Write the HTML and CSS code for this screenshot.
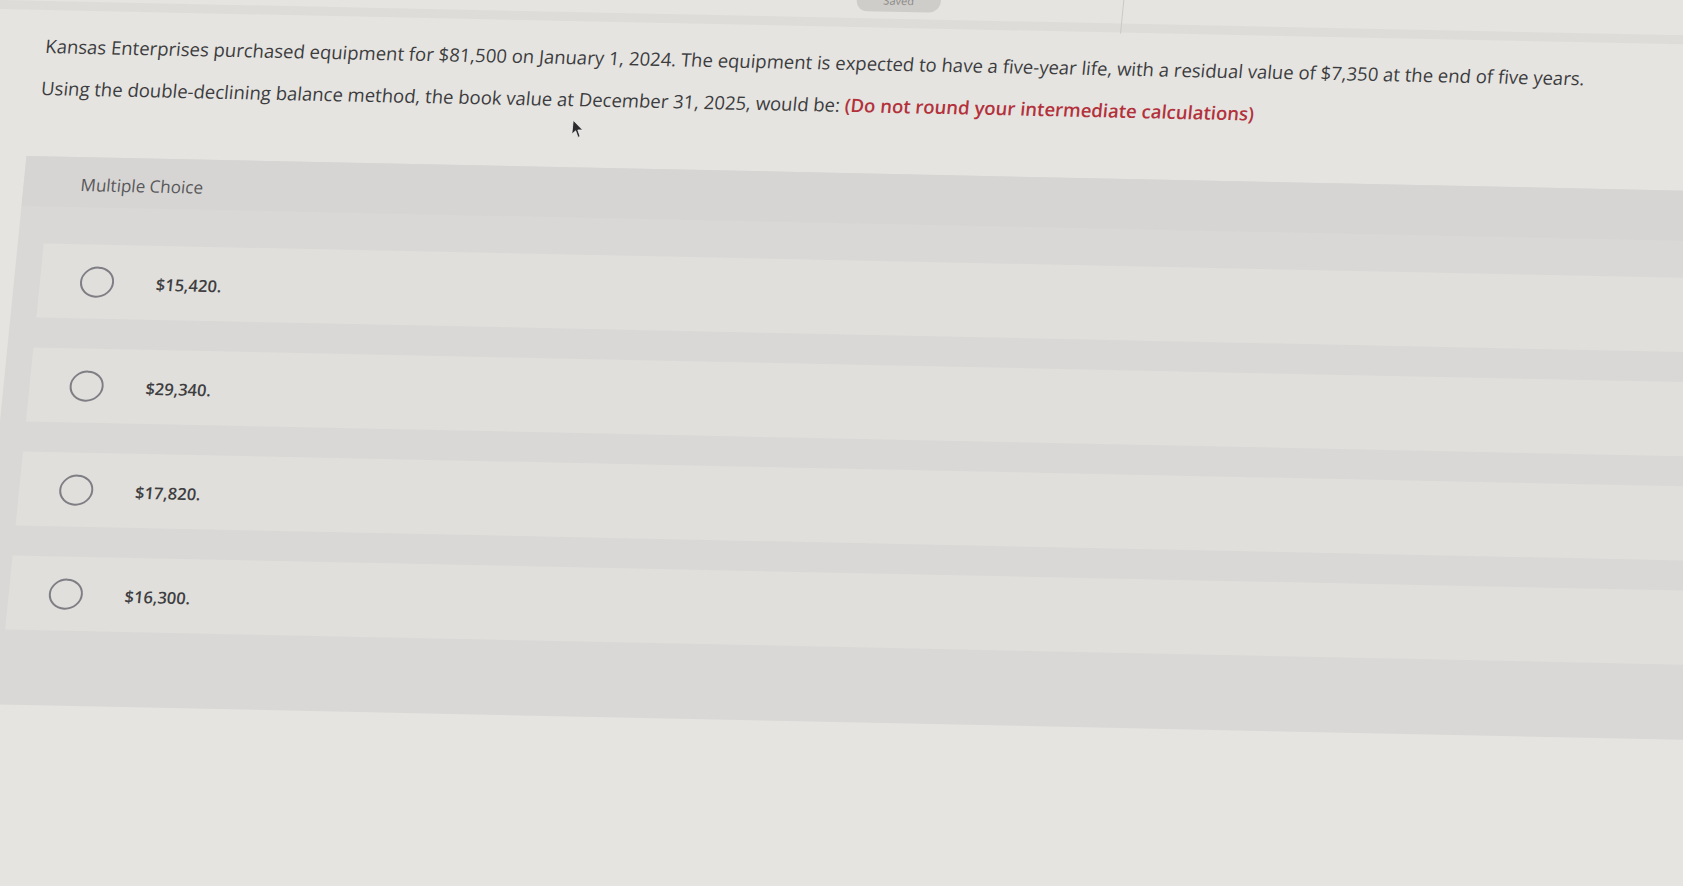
FILE: index.html
```html
<!DOCTYPE html>
<html lang="en">
<head>
<meta charset="utf-8">
<title>Multiple Choice</title>
<link rel="stylesheet" href="styles.css">
</head>
<body>
<div class="stage">
  <header class="topbar">
    <div class="saved">Saved</div>
    <div class="divider"></div>
  </header>
  <section class="question">
    <p class="q-line">Kansas Enterprises purchased equipment for $81,500 on January 1, 2024. The equipment is expected to have a five-year life, with a residual value of $7,350 at the end of five years.</p>
    <p class="q-line">Using the double-declining balance method, the book value at December 31, 2025, would be: <strong class="note">(Do not round your intermediate calculations)</strong></p>
  </section>
  <svg class="cursor" width="14" height="19" viewBox="0 0 14 19" aria-hidden="true">
    <path d="M1 1 L1 15 L4.5 11.5 L7.5 18 L9.5 17 L6.6 10.6 L11.5 10.6 Z" fill="#2b2b2e" stroke="#f2f2f2" stroke-width="0.8"/>
  </svg>
  <section class="mc">
    <div class="mc-head">Multiple Choice</div>
    <div class="mc-options">
      <label class="opt"><span class="radio"></span><span class="opt-text">$15,420.</span></label>
      <label class="opt"><span class="radio"></span><span class="opt-text">$29,340.</span></label>
      <label class="opt"><span class="radio"></span><span class="opt-text">$17,820.</span></label>
      <label class="opt"><span class="radio"></span><span class="opt-text">$16,300.</span></label>
    </div>
  </section>
</div>
</body>
</html>
```
FILE: styles.css
```css
html, body {
  margin: 0;
  padding: 0;
  overflow: hidden;
  background: #e5e4e1;
  height: 100%;
}

.stage {
  position: relative;
  width: 1820px;
  height: 1000px;
  transform-origin: 0 0;
  transform: matrix(1, 0.021, -0.1, 1, 0, 0);
  font-family: "Open Sans", "Noto Sans", "Liberation Sans", sans-serif;
  color: #3c3c3e;
}

.topbar {
  height: 9px;
  background: #dedcd8;
  display: flex;
  align-items: flex-start;
  padding-left: 855px;
}

.saved {
  width: 84px;
  height: 24px;
  margin-top: -31px;
  border-radius: 11px;
  background: #cfcdc9;
  color: #8c8a88;
  font-size: 11px;
  line-height: 26px;
  text-align: center;
  overflow: hidden;
}

.divider {
  width: 1px;
  height: 40px;
  margin-top: -30px;
  margin-left: 182px;
  background: #cbc9c5;
}

.question {
  padding: 24px 0 0 50px;
  height: 122px;
}

.q-line {
  margin: 0 0 18px 0;
  font-size: 18.5px;
  line-height: 24px;
  white-space: nowrap;
}

.note {
  color: #b3313b;
  font-weight: 600;
}

.cursor {
  position: absolute;
  left: 583px;
  top: 107px;
}

.mc {
  margin-left: 42px;
  background: #d9d8d6;
  padding-bottom: 75px;
}

.mc-head {
  background: #d6d5d3;
  padding: 17px 0 11px 57px;
  font-size: 17px;
  line-height: 22px;
  color: #58585b;
}

.mc-options {
  display: flex;
  flex-direction: column;
  gap: 30px;
  padding: 37px 0 0 26px;
}

.opt {
  height: 74px;
  background: #e0dfdc;
  display: flex;
  align-items: center;
  padding-left: 40px;
}

.radio {
  box-sizing: border-box;
  width: 34px;
  height: 31px;
  border: 2px solid #7f7e84;
  border-radius: 50%;
  flex: none;
}

.opt-text {
  margin-left: 42px;
  font-size: 16.5px;
  font-weight: 600;
  color: #3e3e41;
  padding-top: 2px;
}
```
